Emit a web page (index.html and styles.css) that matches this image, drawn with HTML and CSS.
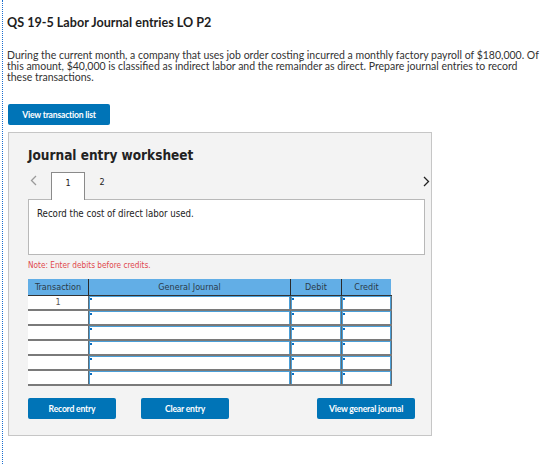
FILE: index.html
```html
<!DOCTYPE html>
<html>
<head>
<meta charset="utf-8">
<link rel="stylesheet" href="styles.css">
</head>
<body>
<div class="page">
  <h1 class="title">QS 19-5 Labor Journal entries LO P2</h1>
  <p class="intro">During the current month, a company that uses job order costing incurred a monthly factory payroll of $180,000. Of<br>this amount, $40,000 is classified as indirect labor and the remainder as direct. Prepare journal entries to record<br>these transactions.</p>
  <button class="btn btn-list">View transaction list</button>

  <div class="panel">
    <h2 class="ws-title">Journal entry worksheet</h2>
    <div class="tabs">
      <span class="chev chev-left"><svg width="7" height="11" viewBox="0 0 7 11"><path d="M6 1 L1.5 5.5 L6 10" fill="none" stroke="#9a9a9a" stroke-width="1.3"/></svg></span>
      <span class="tab active">1</span>
      <span class="tab">2</span>
      <span class="chev chev-right"><svg width="7" height="11" viewBox="0 0 7 11"><path d="M1 1 L5.5 5.5 L1 10" fill="none" stroke="#222" stroke-width="1.3"/></svg></span>
    </div>
    <div class="prompt">Record the cost of direct labor used.</div>
    <div class="note">Note: Enter debits before credits.</div>

    <table class="journal">
      <thead>
        <tr>
          <th class="c-trans">Transaction</th>
          <th class="c-gj">General Journal</th>
          <th class="c-dr">Debit</th>
          <th class="c-cr">Credit</th>
        </tr>
      </thead>
      <tbody>
        <tr><td class="trans">1</td><td class="in"><div class="cell"></div></td><td class="in"><div class="cell"></div></td><td class="in"><div class="cell"></div></td></tr>
        <tr><td class="trans"></td><td class="in"><div class="cell"></div></td><td class="in"><div class="cell"></div></td><td class="in"><div class="cell"></div></td></tr>
        <tr><td class="trans"></td><td class="in"><div class="cell"></div></td><td class="in"><div class="cell"></div></td><td class="in"><div class="cell"></div></td></tr>
        <tr><td class="trans"></td><td class="in"><div class="cell"></div></td><td class="in"><div class="cell"></div></td><td class="in"><div class="cell"></div></td></tr>
        <tr><td class="trans"></td><td class="in"><div class="cell"></div></td><td class="in"><div class="cell"></div></td><td class="in"><div class="cell"></div></td></tr>
        <tr><td class="trans"></td><td class="in"><div class="cell"></div></td><td class="in"><div class="cell"></div></td><td class="in"><div class="cell"></div></td></tr>
      </tbody>
    </table>

    <div class="actions">
      <button class="btn btn-record">Record entry</button>
      <button class="btn btn-clear">Clear entry</button>
      <button class="btn btn-view">View general journal</button>
    </div>
  </div>
</div>
</body>
</html>
```

FILE: styles.css
```css
html, body {
  margin: 0;
  padding: 0;
  background: #fff;
}
.page {
  margin-left: 2px;
  border-left: 1px dotted #1a6fd0;
  min-height: 464px;
  box-sizing: border-box;
  padding: 15px 0 0 4px;
  font-family: Lato, "Liberation Sans", sans-serif;
  color: #222;
}
.title {
  margin: 0;
  font-size: 12.6px;
  line-height: 16px;
  font-weight: 700;
  color: #1e1e1e;
}
.intro {
  margin: 19px 0 0 0;
  font-size: 10.5px;
  line-height: 11px;
  color: #333;
  white-space: nowrap;
}
.btn {
  display: block;
  border: none;
  border-radius: 2px;
  background: #0074b7;
  color: #fff;
  font-family: Lato, "Liberation Sans", sans-serif;
  font-weight: 700;
  font-size: 8.6px;
  letter-spacing: -0.2px;
  padding: 0;
  height: 21px;
  cursor: pointer;
}
.btn-list {
  margin: 21px 0 0 1px;
  width: 102px;
}
.panel {
  margin: 7px 0 0 1px;
  width: 424px;
  height: 304px;
  box-sizing: border-box;
  background: #f3f3f3;
  border: 1px solid #c6c6c6;
  padding: 14px 0 0 19px;
  display: flex;
  flex-direction: column;
}
.ws-title {
  margin: 0;
  font-family: "DejaVu Sans Condensed", "DejaVu Sans", sans-serif;
  font-size: 13.5px;
  line-height: 16px;
  font-weight: 700;
  color: #222;
}
.tabs {
  margin-top: 9px;
  display: flex;
  align-items: stretch;
  height: 27px;
  width: 402px;
  font-family: "DejaVu Sans Condensed", "DejaVu Sans", sans-serif;
  font-size: 9px;
}
.chev {
  display: flex;
  align-items: flex-start;
  padding-top: 3px;
}
.chev-left {
  width: 23px;
  padding-left: 2px;
  box-sizing: border-box;
}
.chev-right {
  margin-left: auto;
  padding-top: 4px;
}
.tab {
  width: 34px;
  display: flex;
  justify-content: center;
  padding-top: 5px;
  box-sizing: border-box;
  color: #222;
}
.tab.active {
  background: #fff;
  border: 1px solid #8a8a8a;
  border-bottom: none;
  margin-bottom: -1px;
  position: relative;
  z-index: 1;
  height: 28px;
}
.prompt {
  width: 397px;
  height: 56px;
  box-sizing: border-box;
  background: #fff;
  border: 1px solid #b8b8b8;
  padding: 8px 0 0 8px;
  font-family: "DejaVu Sans Condensed", "DejaVu Sans", sans-serif;
  font-size: 9.6px;
  line-height: 12px;
  color: #222;
}
.note {
  margin-top: 4px;
  font-family: "DejaVu Sans Condensed", "DejaVu Sans", sans-serif;
  font-size: 8.2px;
  line-height: 12px;
  color: #e0474c;
}
.journal {
  margin-top: 8px;
  border-collapse: collapse;
  table-layout: fixed;
  width: 360px;
  font-family: "DejaVu Sans Condensed", "DejaVu Sans", sans-serif;
  font-size: 9px;
}
.journal th {
  background: #62aee6;
  color: #2b3a48;
  font-weight: 400;
  height: 16px;
  padding: 0;
  border-left: 1px solid #2a2a2a;
  border-bottom: 1px solid #333;
  text-align: center;
}
.journal th:first-child { border-left: none; }
.c-trans { width: 60px; }
.c-gj { width: 201px; }
.c-dr { width: 50px; }
.c-cr { width: 49px; }
.journal td {
  padding: 0;
  height: 13px;
  border-bottom: 2px solid #7a7a7a;
  background: #fff;
}
.journal td.trans {
  text-align: center;
  color: #555;
  vertical-align: top;
  line-height: 12px;
}
.journal td.in {
  border-left: 1px solid #5f6b74;
  vertical-align: top;
}
.journal td.in:last-child {
  border-right: 1px solid #5f6b74;
}
.cell {
  height: 12px;
  border-top: 1px solid #4a9fd8;
  border-left: 1px solid #4a9fd8;
  border-right: 1px solid #4a9fd8;
  position: relative;
}
.cell::before {
  content: "";
  position: absolute;
  left: 0;
  top: 1px;
  width: 2px;
  height: 2px;
  background: #0a6cc0;
}
.actions {
  margin-top: 12px;
  display: flex;
  width: 387px;
}
.btn-record { width: 88px; }
.btn-clear { width: 88px; margin-left: 25px; }
.btn-view { width: 98px; margin-left: auto; }
```
